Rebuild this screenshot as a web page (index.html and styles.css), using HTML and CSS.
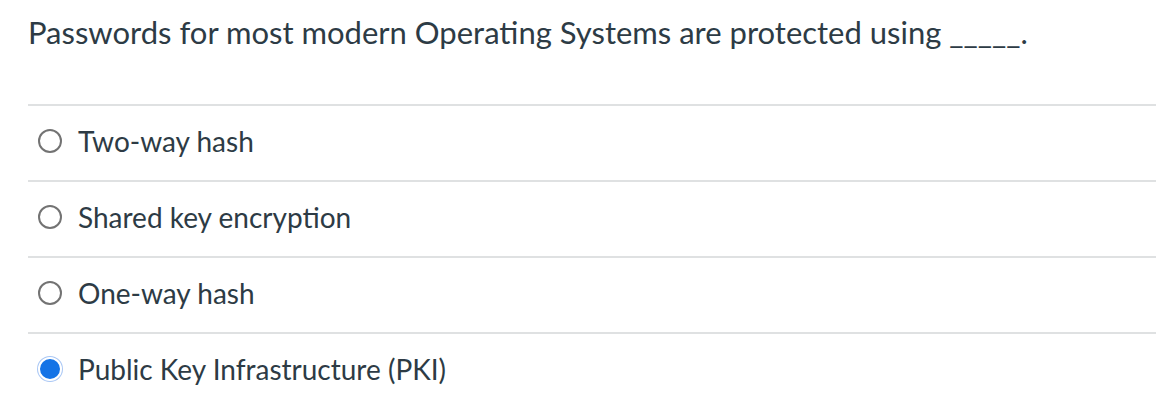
FILE: index.html
```html
<!DOCTYPE html>
<html>
<head>
<meta charset="utf-8">
<link rel="stylesheet" href="styles.css">
</head>
<body>
<div class="quiz">
  <div class="question">Passwords for most modern Operating Systems are protected using _____.</div>
  <div class="answers">
    <div class="answer"><span class="radio"></span><span class="label">Two-way hash</span></div>
    <div class="answer"><span class="radio"></span><span class="label">Shared key encryption</span></div>
    <div class="answer"><span class="radio"></span><span class="label">One-way hash</span></div>
    <div class="answer"><span class="radio checked"></span><span class="label">Public Key Infrastructure (PKI)</span></div>
  </div>
</div>
</body>
</html>
```
FILE: styles.css
```css
html, body {
  margin: 0;
  padding: 0;
  background: #fff;
}
body {
  font-family: Lato, "Liberation Sans", sans-serif;
  color: #2d3b45;
}
.quiz {
  padding-left: 28px;
}
.question {
  font-size: 31px;
  line-height: 38px;
  padding-top: 13px;
  height: 104px;
  box-sizing: border-box;
}
.answers {
  display: flex;
  flex-direction: column;
}
.answer {
  display: flex;
  align-items: center;
  height: 76px;
  box-sizing: border-box;
  border-top: 2px solid #dfe1e2;
  padding-left: 10px;
  padding-bottom: 4px;
}
.radio {
  width: 20px;
  height: 20px;
  border: 2px solid #737373;
  border-radius: 50%;
  flex: none;
  margin-right: 16px;
}
.radio.checked {
  border-color: #fff;
  background: #1473e6;
  box-shadow: 0 0 0 1px #a9c7f5;
}
.label {
  font-size: 28px;
}
```
